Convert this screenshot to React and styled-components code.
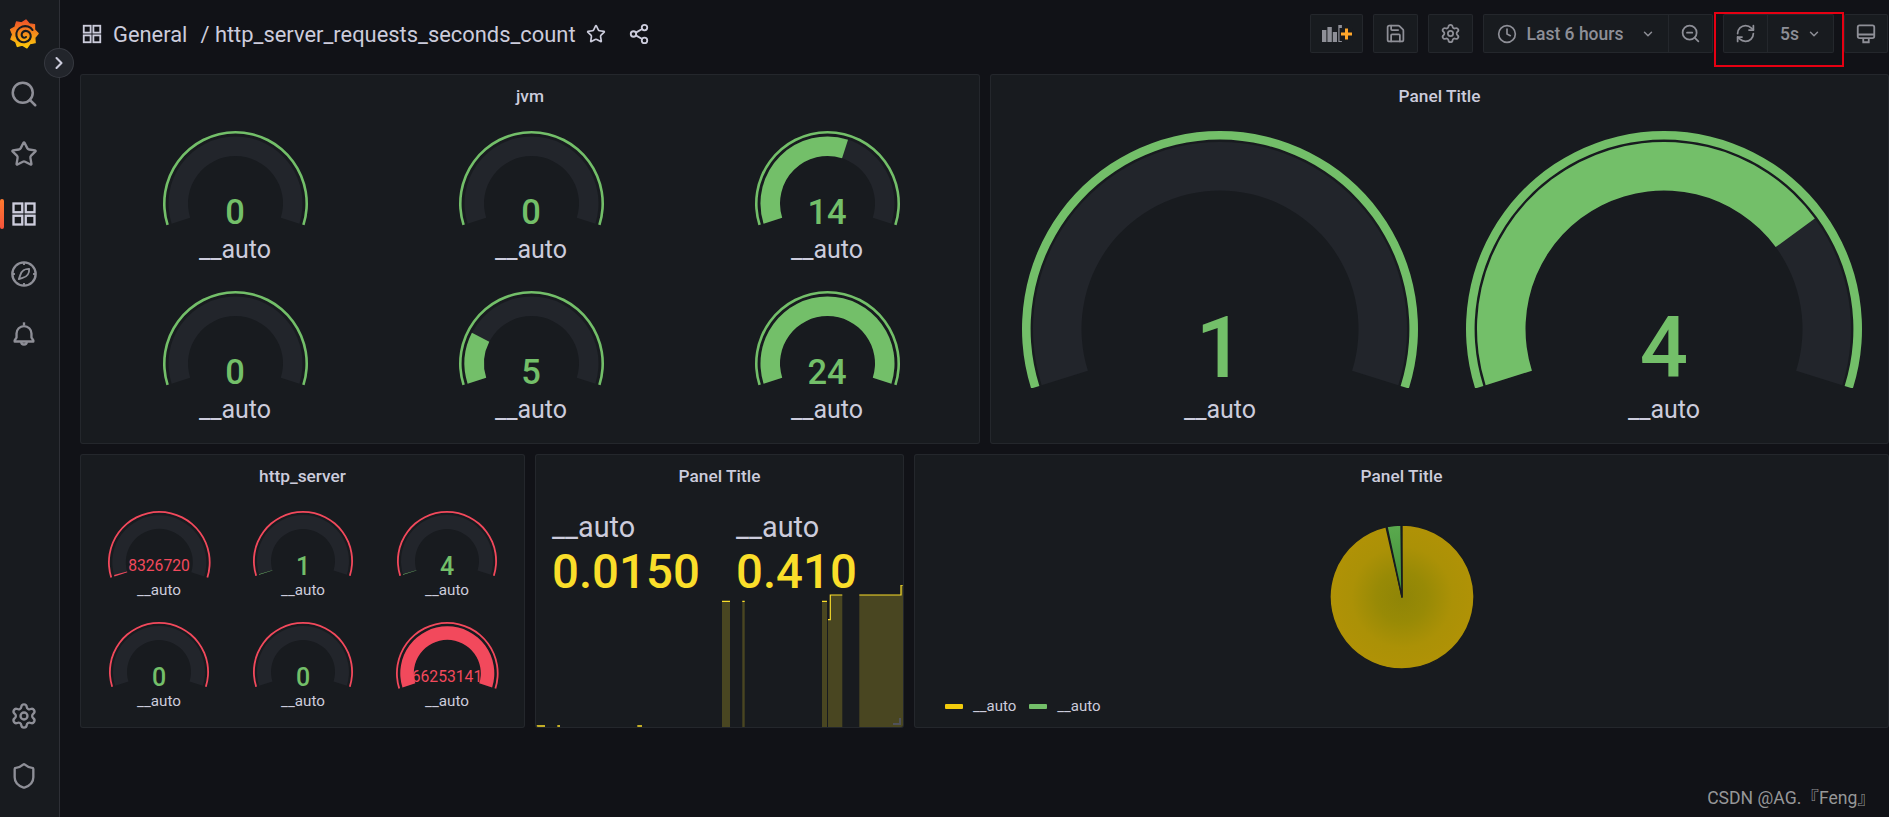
import React from 'react';
import styled, { createGlobalStyle } from 'styled-components';
import { Search, Star, Settings, Shield, Save, Clock, ChevronDown, ChevronRight, ZoomOut, RefreshCw, Share2 } from 'lucide-react';

const GlobalStyle = createGlobalStyle`
  html, body {
    margin: 0;
    height: 100%;
    background: #111217;
    overflow: hidden;
  }
  * { box-sizing: border-box; }
  #root {
    height: 100%;
    font-family: Roboto, "Liberation Sans", sans-serif;
    color: #ccccdc;
  }
`;

const GREEN = '#73bf69';
const RED = '#f2495c';
const YELLOW = '#fade2a';
const TRACK = '#22252b';

const Page = styled.div`
  display: flex;
  width: 1889px;
  height: 817px;
  overflow: hidden;
  position: relative;
`;

const Sidebar = styled.nav`
  position: relative;
  flex: 0 0 60px;
  display: flex;
  flex-direction: column;
  padding-bottom: 11px;
  background: #181b1f;
  border-right: 1px solid rgba(204, 204, 220, 0.12);
  z-index: 2;
`;

const LogoItem = styled.div`
  height: 64px;
  display: flex;
  align-items: center;
  justify-content: center;
  padding-right: 11px;
  padding-top: 3px;
`;

const NavItem = styled.div`
  position: relative;
  height: 60px;
  display: flex;
  align-items: center;
  justify-content: center;
  padding-right: 11px;
  color: ${(p) => (p.$active ? '#ccccdc' : '#8e8f97')};
  margin-top: ${(p) => (p.$push ? 'auto' : '0')};

  &::before {
    content: ${(p) => (p.$active ? '""' : 'none')};
    position: absolute;
    left: 0;
    top: 15px;
    width: 4px;
    height: 30px;
    border-radius: 2px;
    background: linear-gradient(#ff7a2e, #f5533c);
  }
`;

const Expander = styled.div`
  position: absolute;
  left: 44px;
  top: 48px;
  width: 30px;
  height: 30px;
  border-radius: 50%;
  display: flex;
  align-items: center;
  justify-content: center;
  background: #22252b;
  border: 1px solid rgba(204, 204, 220, 0.12);
  color: #ccccdc;
`;

const Main = styled.main`
  flex: 0 0 1829px;
  padding-left: 20px;
  display: flex;
  flex-direction: column;
  gap: 10px;
`;

const Header = styled.header`
  width: 1808px;
  height: 64px;
  flex: 0 0 64px;
  display: flex;
  align-items: flex-start;
  justify-content: space-between;
`;

const Breadcrumb = styled.div`
  height: 68px;
  display: flex;
  align-items: center;
  color: #ccccdc;
  font-size: 21.9px;
`;

const AppsGlyph = styled.span`
  display: flex;
  margin: 0 10px 0 1px;
  color: #ccccdc;
`;

const Crumb = styled.span`
  margin-right: 13px;
`;

const HeaderAction = styled.span`
  display: flex;
  margin-left: ${(p) => p.$gap}px;
  color: #ccccdc;
`;

const Toolbar = styled.div`
  display: flex;
  padding-top: 14px;
  gap: 10px;
`;

const ToolButton = styled.div`
  height: 39px;
  width: ${(p) => p.$w}px;
  display: flex;
  align-items: center;
  justify-content: center;
  background: #181b1f;
  border: 1px solid rgba(204, 204, 220, 0.07);
  border-radius: 2px;
  color: #8e8f97;
`;

const ButtonGroup = styled.div`
  height: 39px;
  display: flex;
  background: #181b1f;
  border: 1px solid rgba(204, 204, 220, 0.07);
  border-radius: 2px;
  color: #8e8f97;
  font-size: 17.5px;
  font-weight: 500;
`;

const GroupPart = styled.div`
  width: ${(p) => p.$w}px;
  display: flex;
  align-items: center;
  justify-content: center;
  gap: ${(p) => p.$gap || 0}px;
  & + & {
    border-left: 1px solid rgba(204, 204, 220, 0.07);
  }
`;

const Highlight = styled.div`
  position: absolute;
  left: 1714px;
  top: 12px;
  width: 130px;
  height: 55px;
  border: 2px solid #e60012;
  pointer-events: none;
`;

const Row = styled.section`
  display: grid;
  grid-template-columns: ${(p) => p.$cols};
  gap: 10px;
  height: ${(p) => p.$h}px;
`;

const Panel = styled.article`
  position: relative;
  display: flex;
  flex-direction: column;
  min-width: 0;
  background: #181b1f;
  border: 1px solid rgba(204, 204, 220, 0.07);
  border-radius: 3px;
  overflow: hidden;
`;

const PanelTitle = styled.h2`
  flex: 0 0 43px;
  margin: 0;
  padding-bottom: 2px;
  display: flex;
  align-items: center;
  justify-content: center;
  font-size: 17.3px;
  font-weight: 500;
  color: #ccccdc;
`;

const GaugeGrid = styled.div`
  display: grid;
  padding: 12px 0 0 ${(p) => p.$left}px;
  grid-template-columns: repeat(${(p) => p.$n}, ${(p) => p.$col}px);
  grid-auto-rows: ${(p) => p.$row}px;
`;

const GaugeCell = styled.div`
  position: relative;
  display: flex;
  flex-direction: column;
  align-items: center;
`;

const GaugeArt = styled.svg`
  display: block;
  flex: none;
`;

const GaugeValue = styled.span`
  position: absolute;
  left: 0;
  right: 0;
  top: ${(p) => p.$top}px;
  transform: translateY(-50%);
  text-align: center;
  line-height: 1;
  font-size: ${(p) => p.$size}px;
  font-weight: ${(p) => p.$weight};
  color: ${(p) => p.$color};
`;

const GaugeLabel = styled.span`
  margin-top: ${(p) => p.$gap}px;
  font-size: ${(p) => p.$size}px;
  line-height: ${(p) => p.$lh}px;
  color: #ccccdc;
`;

const StatGrid = styled.div`
  flex: 1;
  display: grid;
  grid-template-columns: 184px 184px;
`;

const StatCol = styled.div`
  position: relative;
  padding: 13px 0 0 16px;
`;

const StatLabel = styled.div`
  position: relative;
  font-size: 28.8px;
  line-height: 33px;
  color: #ccccdc;
`;

const StatValue = styled.div`
  position: relative;
  margin-top: 3px;
  font-size: 47.4px;
  line-height: 50px;
  font-weight: 500;
  color: ${YELLOW};
`;

const Sparkline = styled.svg`
  position: absolute;
  left: 0;
  bottom: 0;
  width: 184px;
  height: 142px;
`;

const ResizeHandle = styled.span`
  position: absolute;
  right: 2px;
  bottom: 2px;
  width: 8px;
  height: 7px;
  border-right: 2px solid #50525a;
  border-bottom: 2px solid #50525a;
`;

const PieBody = styled.div`
  flex: 1;
  display: flex;
  justify-content: center;
  padding-top: 26px;
`;

const Legend = styled.ul`
  list-style: none;
  margin: 0;
  padding: 0 0 11px 30px;
  display: flex;
  gap: 13px;
`;

const LegendItem = styled.li`
  display: flex;
  align-items: center;
  gap: 10px;
  font-size: 15px;
  line-height: 20px;
  color: #ccccdc;
`;

const Swatch = styled.i`
  width: 18px;
  height: 5px;
  border-radius: 1px;
  background: ${(p) => p.$color};
`;

const Watermark = styled.div`
  position: absolute;
  right: 14px;
  bottom: 8px;
  font-family: Roboto, "Noto Sans CJK SC", sans-serif;
  font-size: 17.6px;
  color: rgba(204, 204, 204, 0.72);
`;

// gauge arcs run from 17.5deg under the horizontal on one side to the same on the other
const START = -107.5;
const SWEEP = 215;

function point(cx, cy, r, deg) {
  const a = (deg * Math.PI) / 180;
  return [cx + r * Math.sin(a), cy - r * Math.cos(a)];
}

function arcPath(cx, cy, outer, inner, from, to) {
  const a0 = START + SWEEP * from;
  const a1 = START + SWEEP * to;
  const large = a1 - a0 > 180 ? 1 : 0;
  const [x0, y0] = point(cx, cy, outer, a0);
  const [x1, y1] = point(cx, cy, outer, a1);
  const [x2, y2] = point(cx, cy, inner, a1);
  const [x3, y3] = point(cx, cy, inner, a0);
  return `M${x0} ${y0}A${outer} ${outer} 0 ${large} 1 ${x1} ${y1}L${x2} ${y2}A${inner} ${inner} 0 ${large} 0 ${x3} ${y3}Z`;
}

function Gauge({ r, band, outer, inner, artH, fill = 0, fillColor = GREEN, bandColor = GREEN, value, valueColor = GREEN, valueSize, valueTop, weight = 500, labelSize, labelLh, labelGap }) {
  const w = r * 2 + 4;
  const cx = w / 2;
  const cy = r + 1;
  return (
    <GaugeCell>
      <GaugeArt width={w} height={artH} viewBox={`0 0 ${w} ${artH}`}>
        <path d={arcPath(cx, cy, r, r - band, 0, 1)} fill={bandColor} />
        <path d={arcPath(cx, cy, outer, inner, 0, 1)} fill={TRACK} />
        {fill > 0 && <path d={arcPath(cx, cy, outer, inner, 0, fill)} fill={fillColor} />}
      </GaugeArt>
      <GaugeValue $top={valueTop} $size={valueSize} $weight={weight} $color={valueColor}>{value}</GaugeValue>
      <GaugeLabel $gap={labelGap} $size={labelSize} $lh={labelLh}>__auto</GaugeLabel>
    </GaugeCell>
  );
}

const jvmGauge = { r: 72.5, band: 2.6, outer: 67, inner: 47.5, artH: 96, valueSize: 34.5, valueTop: 82, labelSize: 25, labelLh: 28, labelGap: 10 };
const bigGauge = { r: 198, band: 8.6, outer: 187, inner: 138.5, artH: 258, valueSize: 85, valueTop: 218, labelSize: 25, labelLh: 28, labelGap: 8 };
const httpGauge = { r: 50, band: 1.8, outer: 46, inner: 32, artH: 68, valueSize: 25, valueTop: 56, labelSize: 15.2, labelLh: 18, labelGap: 3 };
const wideHttp = { r: 51.3, outer: 47, inner: 33.5, valueSize: 15.7, weight: 400 };

const GlyphIcon = ({ size = 28, children, ...rest }) => (
  <svg width={size} height={size} viewBox="0 0 24 24" fill="none" stroke="currentColor" strokeWidth="2" {...rest}>{children}</svg>
);

const AppsIcon = ({ size }) => (
  <GlyphIcon size={size} strokeWidth="2">
    <rect x="3" y="3" width="7.5" height="7.5" />
    <rect x="13.5" y="3" width="7.5" height="7.5" />
    <rect x="3" y="13.5" width="7.5" height="7.5" />
    <rect x="13.5" y="13.5" width="7.5" height="7.5" />
  </GlyphIcon>
);

const CompassIcon = () => (
  <GlyphIcon>
    <circle cx="12" cy="12" r="10" />
    <path d="M12 2v2.2M12 19.8V22M2 12h2.2M19.8 12H22" strokeWidth="1.6" />
    <path d="M16.4 7.6c.3 3.5-1.6 6.9-5.6 7.7l-3.2 1.1 1.2-3.4c.9-3.6 4.2-5.6 7.6-5.4z" strokeWidth="1.6" strokeLinejoin="round" />
  </GlyphIcon>
);

const BellIcon = () => (
  <GlyphIcon>
    <path d="M12 2v2.4" />
    <path d="M5.6 15v-3.4a6.4 6.4 0 0 1 12.8 0V15l1.6 2.4v1H4v-1z" strokeLinejoin="round" />
    <path d="M9.6 18.6a2.4 2.4 0 0 0 4.8 0" />
  </GlyphIcon>
);

const TvIcon = () => (
  <GlyphIcon size={22}>
    <rect x="3" y="2.5" width="18" height="14" rx="2" />
    <path d="M3 12.5h18M8 21h8M9 16.5V21M15 16.5V21" />
  </GlyphIcon>
);

const AddPanelIcon = () => (
  <svg width="32" height="20" viewBox="0 0 32 20">
    <g fill="#8e8f97">
      <rect x="1" y="6" width="4.4" height="12" />
      <rect x="6.4" y="3" width="4.4" height="15" />
      <rect x="11.8" y="8" width="4.2" height="10" />
      <rect x="17.3" y="1" width="3.6" height="17" />
    </g>
    <rect x="18.5" y="4" width="13" height="13" fill="#181b1f" />
    <path d="M24 4.5h3v4h4v3h-4v4h-3v-4h-4v-3h4z" fill="#ffa72b" />
  </svg>
);

const GrafanaLogo = () => {
  // spiky sun outline, one tooth every 40deg
  const points = [];
  for (let i = 0; i < 18; i++) {
    const [x, y] = point(15, 15, i % 2 === 0 ? 14.2 : 11.4, i * 20 + 8);
    points.push(`${x},${y}`);
  }
  return (
    <svg width="30" height="30" viewBox="0 0 30 30">
      <defs>
        <linearGradient id="logoFill" x1="0" y1="0" x2="0" y2="1">
          <stop offset="0" stopColor="#f0512a" />
          <stop offset="1" stopColor="#fbca0a" />
        </linearGradient>
      </defs>
      <polygon points={points.join(' ')} fill="url(#logoFill)" stroke="url(#logoFill)" strokeWidth="1.2" strokeLinejoin="round" />
      <path d="M23.5 11C21.5 7.5 17 6.5 13.5 7.5 9 9 6.8 13 7.5 17 8.3 21.5 12.5 24 16.5 23 20.5 22.2 22.5 18.5 21.5 15.5 20.5 12.5 17 11 14.5 12.5 12.5 13.7 12 16.5 13.5 18 14.5 19 16 18.8 17 18" fill="none" stroke="#181b1f" strokeWidth="2.1" strokeLinecap="round" />
    </svg>
  );
};

const STAT_BARS = 'M2 142V16.3H10V142ZM22.3 142V16.3H24.7V142ZM102 142V16.3H107V142ZM108 142V34.7H110.3V10H122.3V142ZM139.3 142V10H181V0H184V142Z';
const STAT_LINE = 'M2 16.3H10M22.3 16.3H24.7M102 16.3H107M108 34.7H110.3V10H122.3M139.3 10H181V0H184';

function App() {
  return (
    <Page>
      <GlobalStyle />
      <Sidebar>
        <LogoItem><GrafanaLogo /></LogoItem>
        <NavItem><Search size={30} strokeWidth={2} /></NavItem>
        <NavItem><Star size={28} strokeWidth={2} /></NavItem>
        <NavItem $active><AppsIcon /></NavItem>
        <NavItem><CompassIcon /></NavItem>
        <NavItem><BellIcon /></NavItem>
        <NavItem $push><Settings size={28} strokeWidth={2} /></NavItem>
        <NavItem><Shield size={28} strokeWidth={2} /></NavItem>
        <Expander><ChevronRight size={20} strokeWidth={2.5} /></Expander>
      </Sidebar>

      <Main>
        <Header>
          <Breadcrumb>
            <AppsGlyph><AppsIcon size={22} /></AppsGlyph>
            <Crumb>General</Crumb>
            <span>/ http_server_requests_seconds_count</span>
            <HeaderAction $gap={10}><Star size={20} strokeWidth={2} /></HeaderAction>
            <HeaderAction $gap={22}><Share2 size={22} strokeWidth={2} /></HeaderAction>
          </Breadcrumb>
          <Toolbar>
            <ToolButton $w={53}><AddPanelIcon /></ToolButton>
            <ToolButton $w={45}><Save size={21} strokeWidth={2} /></ToolButton>
            <ToolButton $w={45}><Settings size={21} strokeWidth={2} /></ToolButton>
            <ButtonGroup>
              <GroupPart $w={184} $gap={10}>
                <Clock size={20} strokeWidth={2} />
                <span>Last 6 hours</span>
                <ChevronDown size={14} strokeWidth={2.5} style={{ marginLeft: 8 }} />
              </GroupPart>
              <GroupPart $w={44}><ZoomOut size={21} strokeWidth={2} /></GroupPart>
            </ButtonGroup>
            <ButtonGroup>
              <GroupPart $w={43}><RefreshCw size={21} strokeWidth={2} /></GroupPart>
              <GroupPart $w={66} $gap={8}>
                <span>5s</span>
                <ChevronDown size={14} strokeWidth={2.5} />
              </GroupPart>
            </ButtonGroup>
            <ToolButton $w={44}><TvIcon /></ToolButton>
          </Toolbar>
        </Header>

        <Row $cols="900px 899px" $h={370}>
          <Panel>
            <PanelTitle>jvm</PanelTitle>
            <GaugeGrid $n={3} $col={296} $row={160} $left={6}>
              <Gauge {...jvmGauge} value="0" />
              <Gauge {...jvmGauge} value="0" />
              <Gauge {...jvmGauge} value="14" fill={0.583} />
              <Gauge {...jvmGauge} value="0" />
              <Gauge {...jvmGauge} value="5" fill={0.208} />
              <Gauge {...jvmGauge} value="24" fill={1} />
            </GaugeGrid>
          </Panel>
          <Panel>
            <PanelTitle>Panel Title</PanelTitle>
            <GaugeGrid $n={2} $col={444} $row={300} $left={7}>
              <Gauge {...bigGauge} value="1" />
              <Gauge {...bigGauge} value="4" fill={0.75} />
            </GaugeGrid>
          </Panel>
        </Row>

        <Row $cols="445px 369px 975px" $h={274}>
          <Panel>
            <PanelTitle>http_server</PanelTitle>
            <GaugeGrid $n={3} $col={144} $row={111} $left={6}>
              <Gauge {...httpGauge} {...wideHttp} bandColor={RED} fill={0.008} fillColor={RED} value="8326720" valueColor={RED} />
              <Gauge {...httpGauge} bandColor={RED} fill={0.004} value="1" />
              <Gauge {...httpGauge} bandColor={RED} fill={0.004} value="4" />
              <Gauge {...httpGauge} bandColor={RED} value="0" />
              <Gauge {...httpGauge} bandColor={RED} value="0" />
              <Gauge {...httpGauge} {...wideHttp} bandColor={RED} fill={1} fillColor={RED} value="66253141" valueColor={RED} />
            </GaugeGrid>
          </Panel>

          <Panel>
            <PanelTitle>Panel Title</PanelTitle>
            <StatGrid>
              <StatCol>
                <Sparkline viewBox="0 0 184 142">
                  <path d="M.7 141h8.3M21.3 141h2.7M101.3 141h4.7" stroke={YELLOW} strokeWidth="1.5" />
                </Sparkline>
                <StatLabel>__auto</StatLabel>
                <StatValue>0.0150</StatValue>
              </StatCol>
              <StatCol>
                <Sparkline viewBox="0 0 184 142">
                  <path d={STAT_BARS} fill={YELLOW} fillOpacity="0.22" />
                  <path d={STAT_LINE} fill="none" stroke={YELLOW} strokeWidth="1.2" />
                </Sparkline>
                <StatLabel>__auto</StatLabel>
                <StatValue>0.410</StatValue>
              </StatCol>
            </StatGrid>
            <ResizeHandle />
          </Panel>

          <Panel>
            <PanelTitle>Panel Title</PanelTitle>
            <PieBody>
              <svg width="146" height="146" viewBox="-73 -73 146 146">
                <defs>
                  <radialGradient id="pieYellow" cx="0" cy="0" r="72" gradientUnits="userSpaceOnUse">
                    <stop offset="0" stopColor="#8f8507" />
                    <stop offset="0.35" stopColor="#988a06" />
                    <stop offset="0.7" stopColor="#ab9106" />
                    <stop offset="1" stopColor="#b09206" />
                  </radialGradient>
                  <radialGradient id="pieGreen" cx="0" cy="0" r="72" gradientUnits="userSpaceOnUse">
                    <stop offset="0" stopColor="#3f8a36" />
                    <stop offset="1" stopColor="#5aaa4e" />
                  </radialGradient>
                </defs>
                <path d="M0 0V-72A72 72 0 1 1 -16 -70.2Z" fill="url(#pieYellow)" stroke="#181b1f" strokeWidth="1.4" strokeLinejoin="round" />
                <path d="M0 0L-15 -70.4A72 72 0 0 1 -1 -72Z" fill="url(#pieGreen)" stroke="#181b1f" strokeWidth="1.4" strokeLinejoin="round" />
              </svg>
            </PieBody>
            <Legend>
              <LegendItem><Swatch $color="#f2cc0c" />__auto</LegendItem>
              <LegendItem><Swatch $color={GREEN} />__auto</LegendItem>
            </Legend>
          </Panel>
        </Row>
      </Main>

      <Highlight />
      <Watermark>CSDN @AG.『Feng』</Watermark>
    </Page>
  );
}

export default App;
